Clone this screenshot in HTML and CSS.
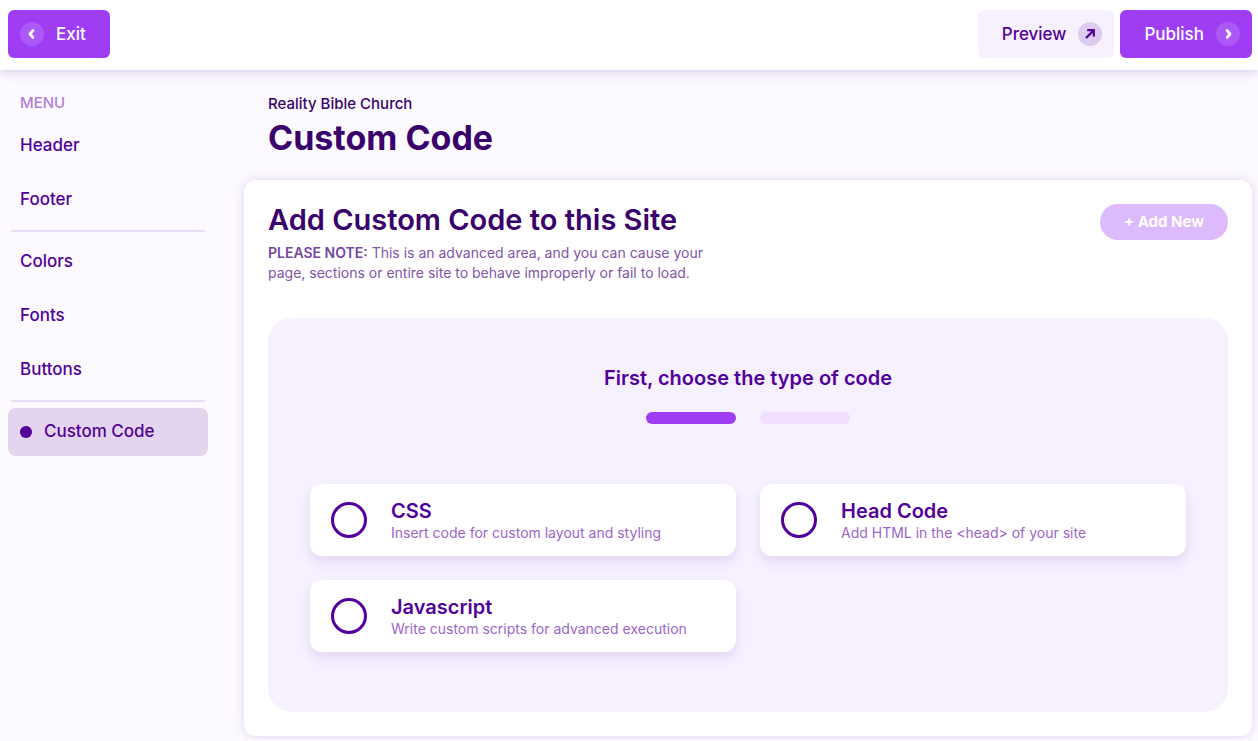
FILE: index.html
```html
<!DOCTYPE html>
<html lang="en">
<head>
<meta charset="utf-8">
<meta name="viewport" content="width=device-width, initial-scale=1">
<title>Custom Code</title>
<link rel="stylesheet" href="styles.css">
</head>
<body>
<header class="topbar">
  <button class="btn btn-primary btn-exit" type="button">
    <svg class="btn-icon" viewBox="0 0 24 24" aria-hidden="true"><circle class="icon-light" cx="12" cy="12" r="12"/><path d="M12.8 8.6 10 12l2.8 3.4" fill="none" stroke="#fff" stroke-width="2.8" stroke-linecap="round" stroke-linejoin="round"/></svg>
    <span>Exit</span>
  </button>
  <div class="topbar-actions">
    <button class="btn btn-soft" type="button">
      <span>Preview</span>
      <svg class="btn-icon" viewBox="0 0 24 24" aria-hidden="true"><circle class="icon-dark" cx="12" cy="12" r="12"/><path d="M8 16l7.4-7.4M9.2 8.2h6.6v6.4" fill="none" stroke="#520099" stroke-width="2.2"/></svg>
    </button>
    <button class="btn btn-primary" type="button">
      <span>Publish</span>
      <svg class="btn-icon" viewBox="0 0 24 24" aria-hidden="true"><circle class="icon-light" cx="12" cy="12" r="12"/><path d="M11.2 8.6 14 12l-2.8 3.4" fill="none" stroke="#fff" stroke-width="2.8" stroke-linecap="round" stroke-linejoin="round"/></svg>
    </button>
  </div>
</header>
<div class="layout">
  <nav class="sidebar" aria-label="Menu">
    <p class="menu-label">MENU</p>
    <a class="menu-item" href="#header">Header</a>
    <a class="menu-item" href="#footer">Footer</a>
    <hr class="menu-rule">
    <a class="menu-item" href="#colors">Colors</a>
    <a class="menu-item" href="#fonts">Fonts</a>
    <a class="menu-item" href="#buttons">Buttons</a>
    <hr class="menu-rule">
    <a class="menu-item is-active" href="#custom-code" aria-current="page">Custom Code</a>
  </nav>
  <main class="content">
    <div class="page-head">
      <p class="site-name">Reality Bible Church</p>
      <h1 class="page-title">Custom Code</h1>
    </div>
    <section class="panel">
      <div class="panel-head">
        <div class="panel-intro">
          <h2 class="panel-title">Add Custom Code to this Site</h2>
          <p class="panel-note"><strong>PLEASE NOTE:</strong> This is an advanced area, and you can cause your page, sections or entire site to behave improperly or fail to load.</p>
        </div>
        <button class="add-new" type="button">+ Add New</button>
      </div>
      <form class="chooser">
        <h3 class="chooser-title" id="chooser-title">First, choose the type of code</h3>
        <div class="steps"><span class="step is-current"></span><span class="step"></span></div>
        <div class="options" role="radiogroup" aria-labelledby="chooser-title">
          <label class="option">
            <input class="option-radio" type="radio" name="type" value="css">
            <span class="option-text"><span class="option-name">CSS</span><span class="option-desc">Insert code for custom layout and styling</span></span>
          </label>
          <label class="option">
            <input class="option-radio" type="radio" name="type" value="head">
            <span class="option-text"><span class="option-name">Head Code</span><span class="option-desc">Add HTML in the &lt;head&gt; of your site</span></span>
          </label>
          <label class="option">
            <input class="option-radio" type="radio" name="type" value="js">
            <span class="option-text"><span class="option-name">Javascript</span><span class="option-desc">Write custom scripts for advanced execution</span></span>
          </label>
        </div>
      </form>
    </section>
  </main>
</div>
</body>
</html>
```
FILE: styles.css
```css
* { box-sizing: border-box; }

body {
  margin: 0;
  background: #fcfaff;
  color: #520099;
  font-family: Inter, "Liberation Sans", sans-serif;
}

h1, h2, h3, p { margin: 0; }

.topbar {
  position: relative;
  display: flex;
  justify-content: space-between;
  padding: 10px 6px 12px 8px;
  background: #fff;
  box-shadow: 0 0 12px rgba(58, 0, 107, 0.25);
}

.topbar-actions { display: flex; gap: 6px; }

.btn {
  display: flex;
  align-items: center;
  gap: 12px;
  height: 48px;
  padding: 0 12px 0 24px;
  border: 0;
  border-radius: 6px;
  font: 500 17px/24px Inter, sans-serif;
  cursor: pointer;
}

.btn-primary { background: #9f3df4; color: #fff; }
.btn-soft { background: #f6f0ff; color: #520099; }
.btn-exit { padding: 0 24px 0 12px; }
.btn-icon { width: 24px; height: 24px; }
.icon-light { fill: rgba(255, 255, 255, 0.15); }
.icon-dark { fill: rgba(82, 0, 153, 0.15); }

.layout { display: flex; gap: 36px; padding: 0 6px 4px 8px; }

.sidebar {
  display: flex;
  flex: none;
  flex-direction: column;
  gap: 6px;
  width: 200px;
  padding-top: 23px;
}

.menu-label {
  padding: 0 12px 3px;
  color: #b180d8;
  font-size: 15px;
  font-weight: 500;
  line-height: 20px;
}

.menu-item {
  display: flex;
  align-items: center;
  gap: 12px;
  height: 48px;
  padding: 0 12px 2px;
  border-radius: 8px;
  color: #520099;
  font-size: 17px;
  font-weight: 500;
  text-decoration: none;
}

.menu-item.is-active { background: #e3d4ef; }

.menu-item.is-active::before {
  content: "";
  width: 12px;
  height: 12px;
  margin-top: 2px;
  border-radius: 50%;
  background: #520099;
}

.menu-rule {
  width: 194px;
  height: 2px;
  margin: 0 3px;
  border: 0;
  border-radius: 1px;
  background: #ebdff6;
}

.content { flex: 1; min-width: 0; color: #3a006b; }
.page-head { padding: 24px 24px 20px; }
.site-name { font-size: 15px; font-weight: 500; line-height: 20px; }
.page-title { padding-top: 2px; font-size: 34px; font-weight: 700; line-height: 44px; }

.panel {
  padding: 24px;
  border-radius: 12px;
  background: #fff;
  box-shadow: 0 0 12px rgba(130, 60, 200, 0.2);
}

.panel-head {
  display: flex;
  align-items: flex-start;
  justify-content: space-between;
  padding-bottom: 35px;
}

.panel-intro { max-width: 460px; }
.panel-title { font-size: 29px; font-weight: 600; line-height: 32px; white-space: nowrap; }
.panel-note { padding-top: 7px; color: #7f55a6; font-size: 14px; font-weight: 400; line-height: 20px; }
.panel-note strong { color: #75489e; font-weight: 600; }

.add-new {
  flex: none;
  height: 36px;
  padding: 0 24px;
  border: 0;
  border-radius: 18px;
  background: #dcbafb;
  color: #fff;
  font: 700 15px/20px Inter, sans-serif;
  cursor: pointer;
}

.chooser {
  padding: 44px 42px 60px;
  border-radius: 24px;
  background: #f6f0ff;
}

.chooser-title {
  color: #520099;
  font-size: 20px;
  font-weight: 600;
  line-height: 32px;
  text-align: center;
}

.steps { display: flex; justify-content: center; gap: 24px; padding: 18px 0 60px; }
.step { width: 90px; height: 12px; border-radius: 6px; background: #f1dfff; }
.step.is-current { background: #9f3df4; }

.options { display: grid; grid-template-columns: 1fr 1fr; gap: 24px; }

.option {
  display: flex;
  align-items: center;
  gap: 24px;
  height: 72px;
  padding: 0 21px;
  border-radius: 12px;
  background: #fff;
  box-shadow: 0 6px 12px rgba(82, 0, 153, 0.1);
  cursor: pointer;
}

.option-radio {
  flex: none;
  width: 36px;
  height: 36px;
  margin: 0;
  border: 3px solid #520099;
  border-radius: 50%;
  appearance: none;
}

.option-radio:checked { background: #520099; box-shadow: inset 0 0 0 4px #fff; }
.option-text { display: flex; flex-direction: column; padding-top: 2px; }
.option-name { color: #520099; font-size: 20px; font-weight: 600; line-height: 24px; }
.option-desc { color: #9b65c8; font-size: 14px; font-weight: 400; line-height: 20px; }
```
